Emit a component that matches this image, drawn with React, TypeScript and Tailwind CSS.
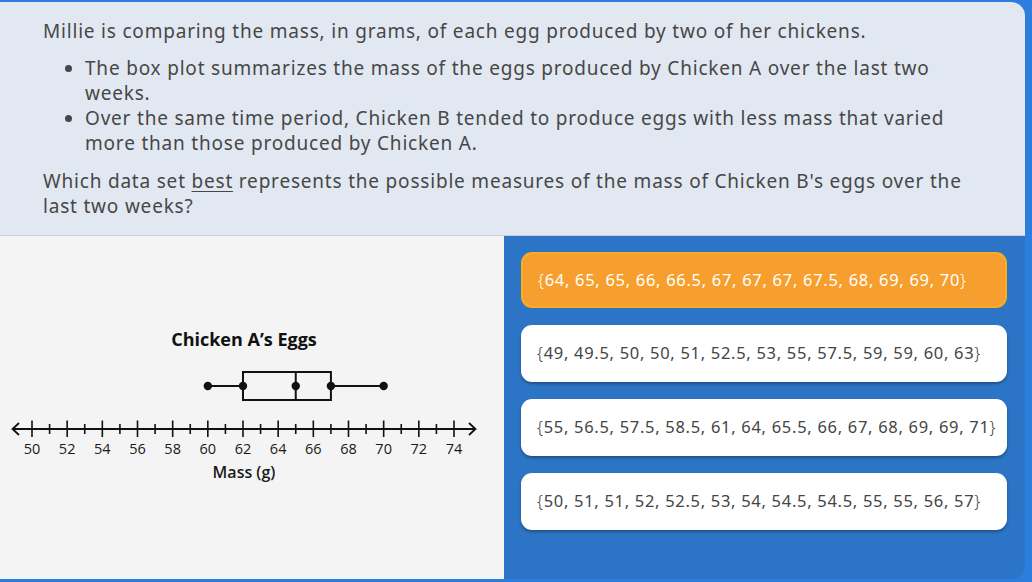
import React from "react";

const X = (v: number) => 32 + (v - 50) * 17.583;

function Chart() {
  const ticks = [];
  for (let v = 50; v <= 74; v++) {
    const major = v % 2 === 0;
    ticks.push(
      <line
        key={v}
        x1={X(v)}
        x2={X(v)}
        y1={major ? 184.5 : 188}
        y2={major ? 201 : 198}
        stroke="#111"
        strokeWidth={1.6}
      />
    );
  }
  const labels = [];
  for (let v = 50; v <= 74; v += 2) {
    labels.push(
      <text key={v} x={X(v)} y={218} textAnchor="middle" fontSize="14.5" fill="#1a1a1a">
        {v}
      </text>
    );
  }
  return (
    <svg width="504" height="343" viewBox="0 0 504 343" style={{ fontFamily: '"Open Sans", sans-serif' }}>
      <text x={244} y={109.5} textAnchor="middle" fontSize="18" fontWeight="700" fill="#111">
        Chicken A’s Eggs
      </text>
      <line x1={X(60)} x2={X(62)} y1={150} y2={150} stroke="#111" strokeWidth={2} />
      <line x1={X(67)} x2={X(70)} y1={150} y2={150} stroke="#111" strokeWidth={2} />
      <rect x={X(62)} y={136} width={X(67) - X(62)} height={28} fill="none" stroke="#111" strokeWidth={2} />
      <line x1={X(65)} x2={X(65)} y1={136} y2={164} stroke="#111" strokeWidth={2} />
      {[60, 62, 65, 67, 70].map((v) => (
        <circle key={v} cx={X(v)} cy={150} r={4.2} fill="#111" />
      ))}
      <line x1={12} x2={476} y1={193} y2={193} stroke="#111" strokeWidth={2} />
      <polyline points="19,187 12.5,193 19,199" fill="none" stroke="#111" strokeWidth={1.8} />
      <polyline points="469,187 475.5,193 469,199" fill="none" stroke="#111" strokeWidth={1.8} />
      {ticks}
      {labels}
      <text x={244} y={242} textAnchor="middle" fontSize="16" fontWeight="600" fill="#1a1a1a">
        Mass (g)
      </text>
    </svg>
  );
}

const answers = [
  "64, 65, 65, 66, 66.5, 67, 67, 67, 67.5, 68, 69, 69, 70",
  "49, 49.5, 50, 50, 51, 52.5, 53, 55, 57.5, 59, 59, 60, 63",
  "55, 56.5, 57.5, 58.5, 61, 64, 65.5, 66, 67, 68, 69, 69, 71",
  "50, 51, 51, 52, 52.5, 53, 54, 54.5, 54.5, 55, 55, 56, 57",
];

export default function App() {
  return (
    <div className="w-[1032px] h-[582px] bg-[#2b7edd] pt-[2px] pr-[7px] pb-[3px] overflow-hidden">
      <div
        className="h-full flex flex-col rounded-r-[14px] overflow-hidden"
        style={{ fontFamily: '"Noto Sans", sans-serif' }}
      >
        <div className="h-[234px] shrink-0 bg-[#e1e8f2] border-b border-[#c9ced6] pl-[43px] pr-[60px] pt-[17px] text-[19px] leading-[25px] tracking-[0.8px] text-[#474747]">
          <p>Millie is comparing the mass, in grams, of each egg produced by two of her chickens.</p>
          <ul className="mt-[12px] pl-[42px] list-disc">
            <li>The box plot summarizes the mass of the eggs produced by Chicken A over the last two weeks.</li>
            <li>
              Over the same time period, Chicken B tended to produce eggs with less mass that varied more than those
              produced by Chicken A.
            </li>
          </ul>
          <p className="mt-[13px]">
            Which data set <span className="underline underline-offset-[3px]">best</span> represents the possible
            measures of the mass of Chicken B's eggs over the last two weeks?
          </p>
        </div>
        <div className="flex-1 flex">
          <div className="w-[504px] bg-[#f4f4f4]">
            <Chart />
          </div>
          <div className="flex-1 bg-[#2c74c5] pt-[16px] pl-[17px] pr-[18px] flex flex-col gap-[17px]">
            {answers.map((a, i) => (
              <div
                key={i}
                className={
                  i === 0
                    ? "h-[56px] rounded-[11px] bg-[#f79f2e] border-[2px] border-[#fbab22] flex items-center pl-[15px] text-white text-[16.5px] tracking-[0.7px]"
                    : "h-[57px] rounded-[11px] bg-white shadow-[0_2px_3px_rgba(0,0,0,0.3)] flex items-center pl-[16px] text-[#454545] text-[16.5px] tracking-[0.7px]"
                }
              >
                <span>
                  <span className="font-light">{"{"}</span>
                  {a}
                  <span className="font-light">{"}"}</span>
                </span>
              </div>
            ))}
          </div>
        </div>
      </div>
    </div>
  );
}
